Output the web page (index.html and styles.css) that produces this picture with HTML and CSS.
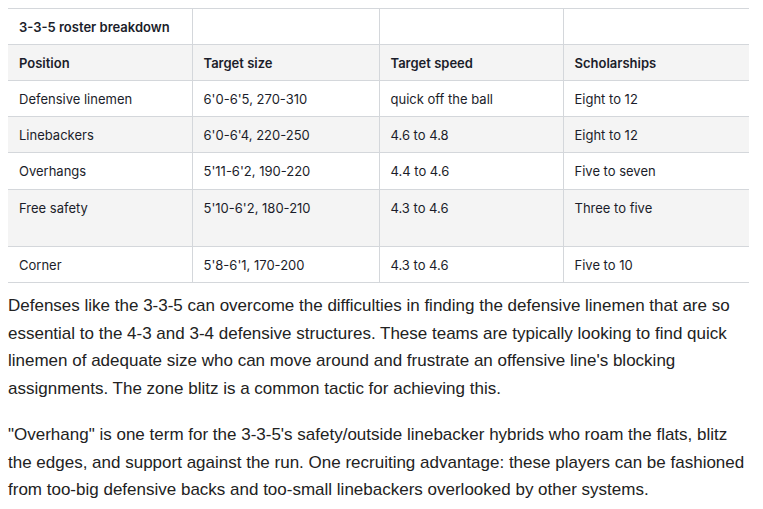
FILE: index.html
```html
<!DOCTYPE html>
<html>
<head>
<meta charset="utf-8">
<link rel="stylesheet" href="styles.css">
</head>
<body>
<div class="article">
  <table class="roster">
    <colgroup>
      <col class="c1"><col class="c2"><col class="c3"><col class="c4">
    </colgroup>
    <tr class="title-row"><td class="title">3-3-5 roster breakdown</td><td></td><td></td><td></td></tr>
    <tr class="head"><th>Position</th><th>Target size</th><th>Target speed</th><th>Scholarships</th></tr>
    <tr><td>Defensive linemen</td><td>6'0-6'5, 270-310</td><td>quick off the ball</td><td>Eight to 12</td></tr>
    <tr class="alt"><td>Linebackers</td><td>6'0-6'4, 220-250</td><td>4.6 to 4.8</td><td>Eight to 12</td></tr>
    <tr class="plus"><td>Overhangs</td><td>5'11-6'2, 190-220</td><td>4.4 to 4.6</td><td>Five to seven</td></tr>
    <tr class="alt tall"><td>Free safety</td><td>5'10-6'2, 180-210</td><td>4.3 to 4.6</td><td>Three to five</td></tr>
    <tr><td>Corner</td><td>5'8-6'1, 170-200</td><td>4.3 to 4.6</td><td>Five to 10</td></tr>
  </table>
  <p class="para">Defenses like the 3-3-5 can overcome the difficulties in finding the defensive linemen that are so essential to the 4-3 and 3-4 defensive structures. These teams are typically looking to find quick linemen of adequate size who can move around and frustrate an offensive line's blocking assignments. The zone blitz is a common tactic for achieving this.</p>
  <p class="para">"Overhang" is one term for the 3-3-5's safety/outside linebacker hybrids who roam the flats, blitz the edges, and support against the run. One recruiting advantage: these players can be fashioned from too-big defensive backs and too-small linebackers overlooked by other systems.</p>
</div>
</body>
</html>
```
FILE: styles.css
```css
html, body {
  margin: 0;
  padding: 0;
  background: #ffffff;
}
.article {
  padding: 8px 14px 0 8px;
}
.roster {
  width: 741px;
  border-collapse: collapse;
  table-layout: fixed;
  font-family: "Inter", "Roboto", sans-serif;
  font-size: 13px;
  color: #1b1d2a;
}
.c1 { width: 184px; }
.c2 { width: 187px; }
.c3 { width: 184px; }
.c4 { width: 186px; }
.roster td, .roster th {
  border-top: 1px solid #d4d7db;
  border-bottom: 1px solid #d4d7db;
  border-left: 1px solid #d4d7db;
  padding: 11px 11px 9px 11px;
  line-height: 15px;
  height: 15px;
  text-align: left;
  vertical-align: top;
  font-weight: 400;
}
.roster td:first-child, .roster th:first-child {
  border-left: none;
}
.roster .title {
  font-weight: 600;
}
.roster .head th {
  font-weight: 600;
  background: #f4f4f4;
}
.roster .alt td {
  background: #f4f4f4;
}
.roster .plus td {
  height: 16px;
}
.roster .tall td {
  height: 36px;
}
.para {
  margin: 9px 0 19px 0;
  font-family: "Liberation Sans", Arial, sans-serif;
  font-size: 17px;
  line-height: 27.5px;
  color: #222222;
}
```
